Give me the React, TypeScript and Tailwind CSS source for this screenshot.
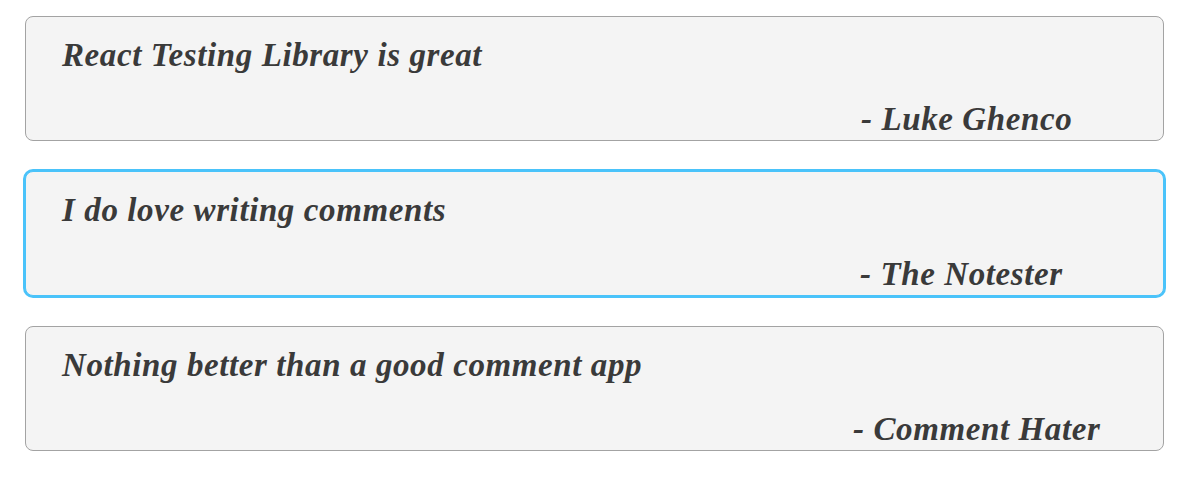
type Comment = {
  text: string;
  author: string;
  offset: string;
  active?: boolean;
};

const comments: Comment[] = [
  { text: "React Testing Library is great", author: "Luke Ghenco", offset: "ml-[835px]" },
  { text: "I do love writing comments", author: "The Notester", offset: "ml-[834px]", active: true },
  { text: "Nothing better than a good comment app", author: "Comment Hater", offset: "ml-[827px]" },
];

function CommentCard({ comment }: { comment: Comment }) {
  return (
    <div
      className={
        comment.active
          ? "h-[125px] flex flex-col justify-between bg-[#f4f4f4] border border-[#4ac3fa] ring-2 ring-[#4ac3fa] rounded-lg pt-[22px] pb-[4px]"
          : "h-[125px] flex flex-col justify-between bg-[#f4f4f4] border border-[#a3a3a3] rounded-lg pt-[22px] pb-[4px]"
      }
    >
      <p className="pl-[36px] leading-none">{comment.text}</p>
      <p className={`${comment.offset} leading-none whitespace-nowrap`}>- {comment.author}</p>
    </div>
  );
}

export default function App() {
  return (
    <div
      className="min-h-screen bg-white pt-[16px] pl-[25px] pr-[24px] flex flex-col gap-[30px] text-[33px] tracking-[0.6px] italic font-semibold text-[#3a3a3a]"
      style={{ fontFamily: '"Liberation Serif", "DejaVu Serif", serif' }}
    >
      {comments.map((c) => (
        <CommentCard key={c.author} comment={c} />
      ))}
    </div>
  );
}
